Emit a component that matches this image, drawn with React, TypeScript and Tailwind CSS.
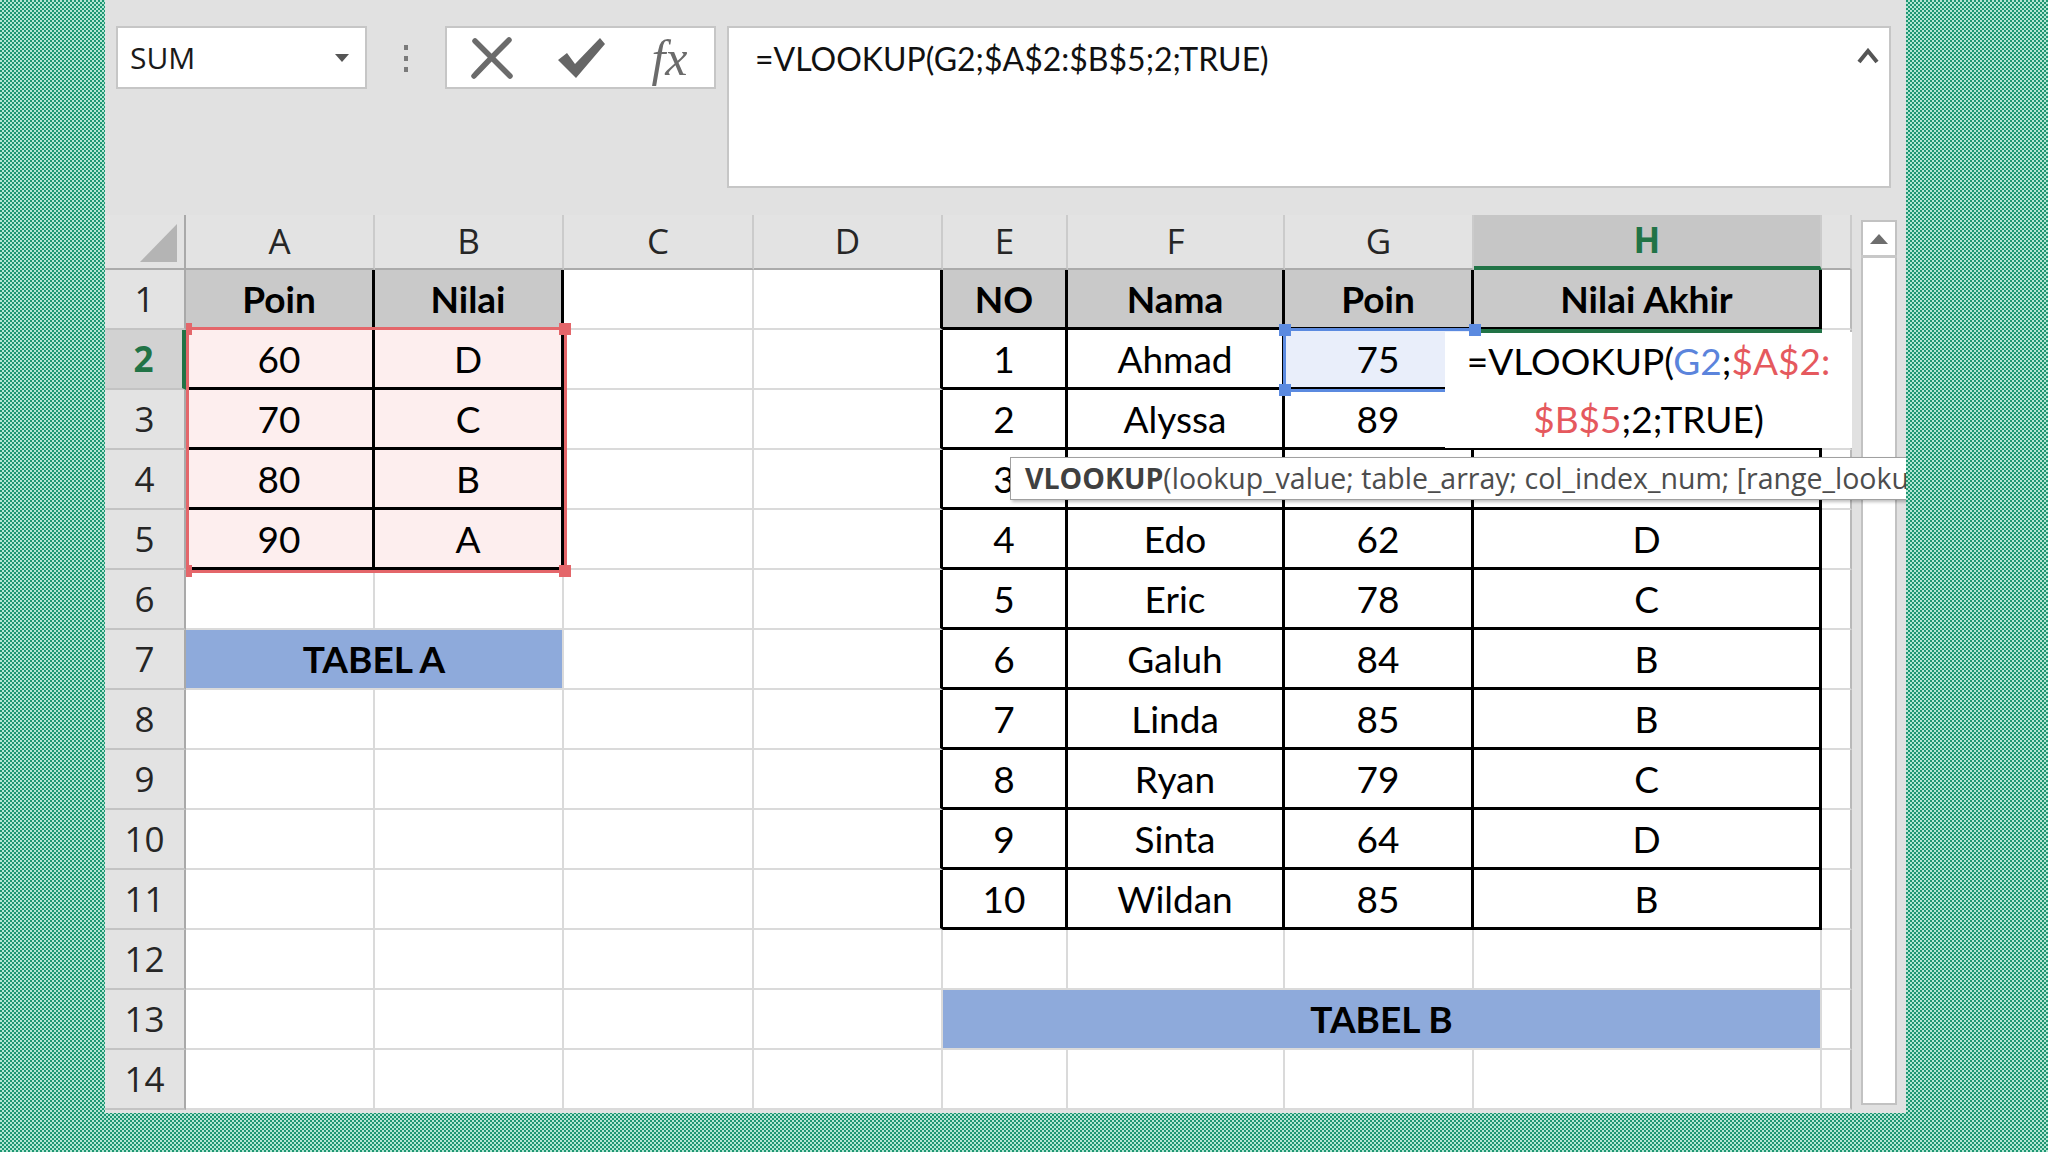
import React from 'react';

// Excel-like sheet: VLOOKUP example
type Fill = 'head' | 'pink' | 'g2' | 'blue' | undefined;
type CellInfo = { text?: string; bold?: boolean; fill?: Fill; span?: number } | null;

const COL_LETTERS = ['A', 'B', 'C', 'D', 'E', 'F', 'G', 'H', ''];

const tableA = [
  ['60', 'D'],
  ['70', 'C'],
  ['80', 'B'],
  ['90', 'A'],
];

const tableB = [
  ['1', 'Ahmad', '75', ''],
  ['2', 'Alyssa', '89', ''],
  ['3', '', '', ''],
  ['4', 'Edo', '62', 'D'],
  ['5', 'Eric', '78', 'C'],
  ['6', 'Galuh', '84', 'B'],
  ['7', 'Linda', '85', 'B'],
  ['8', 'Ryan', '79', 'C'],
  ['9', 'Sinta', '64', 'D'],
  ['10', 'Wildan', '85', 'B'],
];

const headB = ['NO', 'Nama', 'Poin', 'Nilai Akhir'];

function inTable(r: number, c: number) {
  return (r >= 1 && r <= 5 && c >= 1 && c <= 2) || (r >= 1 && r <= 11 && c >= 5 && c <= 8);
}

function getCell(r: number, c: number): CellInfo {
  if (r === 1 && c === 1) return { text: 'Poin', bold: true, fill: 'head' };
  if (r === 1 && c === 2) return { text: 'Nilai', bold: true, fill: 'head' };
  if (r >= 2 && r <= 5 && c >= 1 && c <= 2) return { text: tableA[r - 2][c - 1], fill: 'pink' };
  if (r === 7 && c === 1) return { text: 'TABEL A', bold: true, fill: 'blue', span: 2 };
  if (r === 7 && c === 2) return null;
  if (r === 1 && c >= 5 && c <= 8) return { text: headB[c - 5], bold: true, fill: 'head' };
  if (r >= 2 && r <= 11 && c >= 5 && c <= 8)
    return { text: tableB[r - 2][c - 5], fill: r === 2 && c === 7 ? 'g2' : undefined };
  if (r === 13 && c === 5) return { text: 'TABEL B', bold: true, fill: 'blue', span: 4 };
  if (r === 13 && c >= 6 && c <= 8) return null;
  return {};
}

const fillClass: Record<string, string> = {
  head: 'bg-[#c9c9c9]',
  pink: 'bg-[#fdeeee]',
  g2: 'bg-[#e9eefa]',
  blue: 'bg-[#8eaadb]',
};

function SheetCell({ r, c }: { r: number; c: number }) {
  const info = getCell(r, c);
  if (info === null) return null;
  const last = c + (info.span ?? 1) - 1;
  const rightBlack = inTable(r, last) || inTable(r, last + 1);
  const bottomBlack = inTable(r, c) || inTable(r + 1, c);
  const rb = rightBlack
    ? 'border-r-[3px] border-r-black'
    : c === 9
      ? 'border-r-2 border-r-[#b9b9b9]'
      : 'border-r-2 border-r-[#dadada]';
  const bb = bottomBlack ? 'border-b-[3px] border-b-black' : 'border-b-2 border-b-[#dadada]';
  const span = info.span === 2 ? 'col-span-2' : info.span === 4 ? 'col-span-4' : '';
  return (
    <div
      className={`flex items-center justify-center overflow-hidden whitespace-nowrap ${rb} ${bb} ${span} ${
        info.fill ? fillClass[info.fill] : 'bg-white'
      } ${info.bold ? 'font-bold' : ''}`}
    >
      {info.text}
    </div>
  );
}

function RowHeader({ r }: { r: number }) {
  const sel = r === 2;
  return (
    <div
      className={`flex items-center justify-center border-b-2 border-b-[#c3c3c3] font-['Open_Sans',sans-serif] text-[35px] ${
        sel
          ? 'bg-[#d2d2d2] font-bold text-[#217346] border-r-4 border-r-[#217346]'
          : 'bg-[#e3e3e3] text-[#262626] border-r-2 border-r-[#a9a9a9]'
      }`}
    >
      {r}
    </div>
  );
}

function ColHeader({ c }: { c: number }) {
  const sel = c === 8;
  return (
    <div
      className={`flex items-center justify-center border-r-2 border-r-[#cbcbcb] font-['Open_Sans',sans-serif] text-[35px] ${
        sel
          ? 'bg-[#c6c6c6] font-bold text-[#217346] border-b-4 border-b-[#217346]'
          : 'bg-[#e3e3e3] text-[#262626] border-b-2 border-b-[#ababab]'
      }`}
    >
      {COL_LETTERS[c - 1]}
    </div>
  );
}

function Toolbar() {
  return (
    <div className="flex h-[215px] items-start pl-[11px] pt-[26px]">
      <div className="flex h-[63px] w-[251px] items-center justify-between border-2 border-[#c6c6c6] bg-white pl-[12px] pr-[16px]">
        <span className="font-['Open_Sans',sans-serif] text-[30px] text-[#1a1a1a]">SUM</span>
        <svg width="14" height="8" viewBox="0 0 14 8">
          <polygon points="0,0 14,0 7,8" fill="#555" />
        </svg>
      </div>
      <div className="ml-[37px] mt-[19px] flex flex-col gap-[6px]">
        <div className="h-[5px] w-[4px] bg-[#7a7a7a]" />
        <div className="h-[5px] w-[4px] bg-[#7a7a7a]" />
        <div className="h-[5px] w-[4px] bg-[#7a7a7a]" />
      </div>
      <div className="ml-[37px] flex h-[63px] w-[271px] items-center border-2 border-[#c6c6c6] bg-white">
        <div className="flex w-[89px] justify-center">
          <svg width="46" height="42" viewBox="0 0 46 42">
            <path d="M6 4 C16 14 28 26 41 39" stroke="#6b6b6b" strokeWidth="5.5" fill="none" strokeLinecap="round" />
            <path d="M40 3 C30 13 17 26 5 39" stroke="#6b6b6b" strokeWidth="5.5" fill="none" strokeLinecap="round" />
          </svg>
        </div>
        <div className="flex w-[89px] justify-center">
          <svg width="50" height="44" viewBox="0 0 50 44">
            <polygon points="2,24 11,17 19,28 44,2 49,8 20,42" fill="#666" />
          </svg>
        </div>
        <div className="flex w-[89px] justify-center">
          <span className="font-['Liberation_Serif',serif] text-[50px] italic leading-[56px] text-[#6b6b6b]">fx</span>
        </div>
      </div>
      <div className="ml-[11px] flex h-[162px] w-[1164px] items-start justify-between border-2 border-[#c6c6c6] bg-white pl-[26px] pr-[10px] pt-[11px]">
        <span className="font-['Lato',sans-serif] text-[32px] leading-[40px] text-[#111]">
          =VLOOKUP(G2;$A$2:$B$5;2;TRUE)
        </span>
        <svg width="22" height="16" viewBox="0 0 22 16" className="mt-[9px]">
          <path d="M2 14 L11 3 L20 14" stroke="#555" strokeWidth="4" fill="none" />
        </svg>
      </div>
    </div>
  );
}

function Scrollbar() {
  return (
    <div className="h-[898px] w-[54px] px-[9px] pt-[5px]">
      <div className="flex h-[35px] items-center justify-center border-2 border-b-0 border-[#c2c2c2] bg-white">
        <svg width="18" height="10" viewBox="0 0 18 10">
          <polygon points="9,0 18,10 0,10" fill="#6e6e6e" />
        </svg>
      </div>
      <div className="h-[3px] bg-[#c8c8c8]" />
      <div className="h-[847px] border-2 border-t-0 border-[#c2c2c2] bg-white" />
    </div>
  );
}

export default function App() {
  const rows = Array.from({ length: 14 }, (_, i) => i + 1);
  const cols = Array.from({ length: 9 }, (_, i) => i + 1);
  return (
    <div className="flex h-[1152px] w-[2048px] overflow-hidden bg-[image:repeating-conic-gradient(#1d9672_0_25%,#b3e6d3_0_50%)] bg-[length:4px_4px]">
      <div className="relative ml-[105px] h-[1113px] w-[1801px] overflow-hidden bg-[#e1e1e1]">
        <Toolbar />
        <div className="flex">
          <div className="grid w-[1747px] grid-cols-[81px_189px_189px_190px_189px_125px_217px_189px_348px_30px] grid-rows-[55px_repeat(14,60px)] font-['Lato',sans-serif] text-[37px] text-black">
            <div className="flex items-end justify-end border-r-2 border-b-2 border-r-[#a9a9a9] border-b-[#ababab] bg-[#e3e3e3] pr-[7px] pb-[6px]">
              <svg width="37" height="38" viewBox="0 0 37 38">
                <polygon points="37,0 37,38 0,38" fill="#b4b4b4" />
              </svg>
            </div>
            {cols.map((c) => (
              <ColHeader key={`h${c}`} c={c} />
            ))}
            {rows.map((r) => (
              <React.Fragment key={r}>
                <RowHeader r={r} />
                {cols.map((c) => (
                  <SheetCell key={`${r}-${c}`} r={r} c={c} />
                ))}
              </React.Fragment>
            ))}
          </div>
          <Scrollbar />
        </div>

        {/* reference range $A$2:$B$5 */}
        <div className="absolute left-[81px] top-[327px] h-[246px] w-[381px] border-[3px] border-[#e4666a]">
          <div className="absolute -left-[3px] -top-[7px] h-[12px] w-[6px] bg-[#e4666a]" />
          <div className="absolute -bottom-[7px] -left-[3px] h-[12px] w-[6px] bg-[#e4666a]" />
          <div className="absolute -right-[7px] -top-[7px] h-[12px] w-[12px] bg-[#e4666a]" />
          <div className="absolute -bottom-[7px] -right-[7px] h-[12px] w-[12px] bg-[#e4666a]" />
        </div>

        {/* reference G2 */}
        <div className="absolute left-[1178px] top-[328px] h-[64px] w-[193px] border-[3px] border-[#5b8ae0]">
          <div className="absolute -left-[7px] -top-[7px] h-[12px] w-[12px] bg-[#5b8ae0]" />
          <div className="absolute -bottom-[7px] -left-[7px] h-[12px] w-[12px] bg-[#5b8ae0]" />
        </div>

        {/* in-cell editor H2 */}
        <div className="absolute left-[1340px] top-[332px] h-[116px] w-[407px] bg-white text-center font-['Lato',sans-serif] text-[37px] leading-[58px] whitespace-nowrap text-black">
          <div>
            =VLOOKUP(<span className="text-[#5b84dc]">G2</span>;<span className="text-[#e5595e]">$A$2:</span>
          </div>
          <div>
            <span className="text-[#e5595e]">$B$5</span>;2;TRUE)
          </div>
        </div>
        <div className="absolute left-[1369px] top-[329px] h-[4px] w-[348px] bg-[#217346]" />
        <div className="absolute left-[1364px] top-[324px] h-[12px] w-[12px] bg-[#5b8ae0]" />

        {/* function tooltip */}
        <div className="absolute left-[905px] top-[457px] h-[43px] w-[1100px] whitespace-nowrap border border-[#a0a0a0] bg-white pl-[14px] font-['Open_Sans',sans-serif] text-[28.5px] leading-[40px] text-[#4d4d4d] shadow-[2px_2px_3px_rgba(0,0,0,0.25)]">
          <span className="font-bold text-[#404040]">VLOOKUP</span>(lookup_value; table_array; col_index_num; [range_lookup])
        </div>
      </div>
    </div>
  );
}
